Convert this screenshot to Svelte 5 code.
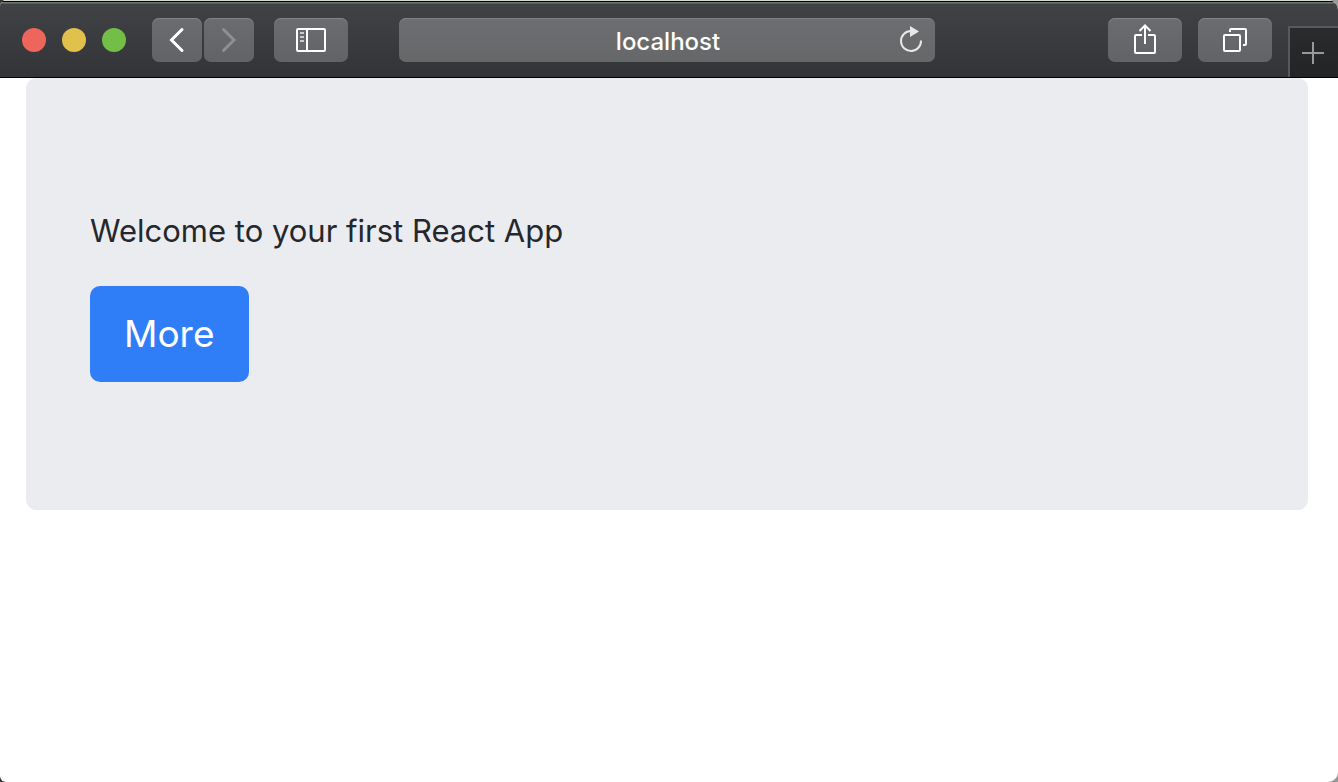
<script>
  const lights = [
    { label: 'Close', color: '#ee655b' },
    { label: 'Minimize', color: '#e1c04c' },
    { label: 'Zoom', color: '#73be47' }
  ];
  let address = $state('localhost');
</script>

<div class="window">
  <header>
    <div class="left">
      <div class="lights">
        {#each lights as light}
          <button class="light" aria-label={light.label} style:background={light.color}></button>
        {/each}
      </div>
      <div class="history">
        <button class="tool nav" aria-label="Back">
          <svg width="50" height="44" viewBox="0 0 50 44" fill="none" stroke="#fff" stroke-width="3" stroke-linecap="round" stroke-linejoin="miter"><path d="M30 11.500 19.500 22 30 32.500" /></svg>
        </button>
        <button class="tool nav" aria-label="Forward">
          <svg width="50" height="44" viewBox="0 0 50 44" fill="none" stroke="#8e8f92" stroke-width="3" stroke-linecap="round" stroke-linejoin="miter"><path d="M19.500 11.500 30 22 19.500 32.500" /></svg>
        </button>
      </div>
      <button class="tool" aria-label="Show sidebar">
        <svg width="74" height="44" viewBox="0 0 74 44" fill="none" stroke="#fff" stroke-width="2"><rect x="23" y="11" width="28" height="22" rx="1" /><path d="M33 11v22" /><path d="M26 15h4M26 19h4M26 23h4" stroke="#c9cacc" /></svg>
      </button>
    </div>

    <div class="address">
      <input type="text" aria-label="Address" bind:value={address} />
      <button class="reload" aria-label="Reload">
        <svg width="28" height="44" viewBox="0 0 28 44"><path d="M14 13a10 10 0 1 0 10 9.500" fill="none" stroke="#e8e8e9" stroke-width="2" /><path d="M13 8v11l9-5.500z" fill="#e8e8e9" /></svg>
      </button>
    </div>

    <div class="right">
      <button class="tool" aria-label="Share">
        <svg width="74" height="44" viewBox="0 0 74 44" fill="none" stroke="#fff" stroke-width="2"><path d="M34 17h-6q-1 0-1 1v16q0 1 1 1h18q1 0 1-1V18q0-1-1-1h-6" /><path d="M37 26V7.500M31.500 13 37 7.500l5.500 5.500" /></svg>
      </button>
      <button class="tool" aria-label="Show tabs">
        <svg width="74" height="44" viewBox="0 0 74 44" fill="none" stroke="#fff" stroke-width="2"><rect x="26" y="17" width="16" height="16" rx="1" /><path d="M32 14v-2q0-1 1-1h14q1 0 1 1v14q0 1-1 1h-2" /></svg>
      </button>
      <button class="new-tab" aria-label="New tab">
        <svg width="22" height="22" viewBox="0 0 22 22" stroke="#98999a" stroke-width="2"><path d="M11 0v22M0 11h22" /></svg>
      </button>
    </div>
  </header>

  <main>
    <section class="jumbotron">
      <p>Welcome to your first React App</p>
      <button class="more">More</button>
    </section>
  </main>
</div>

<style>
  :global(body) {
    margin: 0;
    background: linear-gradient(90deg, #333, #999);
  }

  .window {
    box-sizing: border-box;
    min-height: 100vh;
    display: flex;
    flex-direction: column;
    overflow: hidden;
    border-radius: 6px 10px 10px 6px;
    background: #fff;
    font-family: Inter, "Liberation Sans", sans-serif;
  }

  button {
    border: 0;
    padding: 0;
    font-family: inherit;
  }

  svg {
    display: block;
  }

  header {
    box-sizing: border-box;
    height: 78px;
    display: grid;
    grid-template-columns: 377fr 536fr 403fr;
    align-items: center;
    padding: 2px 0 0 22px;
    border-bottom: 1px solid #000;
    background: linear-gradient(#d5ddd5 0 1px, #000 1px 2px, #717573 2px 3px, #5a5d5c 3px 4px, #414245 4px, #333437 100%);
  }

  .left,
  .lights,
  .history,
  .right {
    display: flex;
    align-items: center;
  }

  .lights {
    gap: 16px;
    margin-right: 26px;
  }

  .light {
    width: 24px;
    height: 24px;
    border-radius: 50%;
  }

  .history {
    gap: 2px;
    margin-right: 20px;
  }

  .tool,
  .address {
    height: 44px;
    border-radius: 7px;
    background: linear-gradient(#6b6c70, #626367);
    box-shadow: inset 0 1px #808184;
  }

  .tool {
    width: 74px;
  }

  .nav {
    width: 50px;
  }

  .address {
    display: grid;
    grid-template-columns: 1fr 28px;
    padding: 0 10px 0 40px;
    background: linear-gradient(#6d6e71, #666769);
  }

  input {
    min-width: 0;
    border: 0;
    padding: 4px 0 0;
    outline: 0;
    background: none;
    color: #fff;
    font: 500 24px Inter, "Liberation Sans", sans-serif;
    text-align: center;
  }

  .reload {
    background: none;
  }

  .right {
    height: 100%;
    justify-content: flex-end;
    gap: 16px;
  }

  .new-tab {
    box-sizing: border-box;
    align-self: flex-end;
    width: 50px;
    height: 51px;
    display: grid;
    place-content: center;
    padding-right: 2px;
    border-top: 2px solid #58595b;
    border-left: 2px solid #58595b;
    background: linear-gradient(#2a2b2d, #232426);
  }

  main {
    padding: 0 30px 0 26px;
  }

  .jumbotron {
    padding: 128px 64px;
    border-radius: 10px;
    background: #ebecf0;
  }

  p {
    margin: 0 0 30px;
    color: #24272b;
    font-size: 31px;
    line-height: 50px;
  }

  .more {
    padding: 0 34px;
    border-radius: 10px;
    background: #307ef7;
    color: #fff;
    font-size: 37px;
    line-height: 96px;
  }
</style>
